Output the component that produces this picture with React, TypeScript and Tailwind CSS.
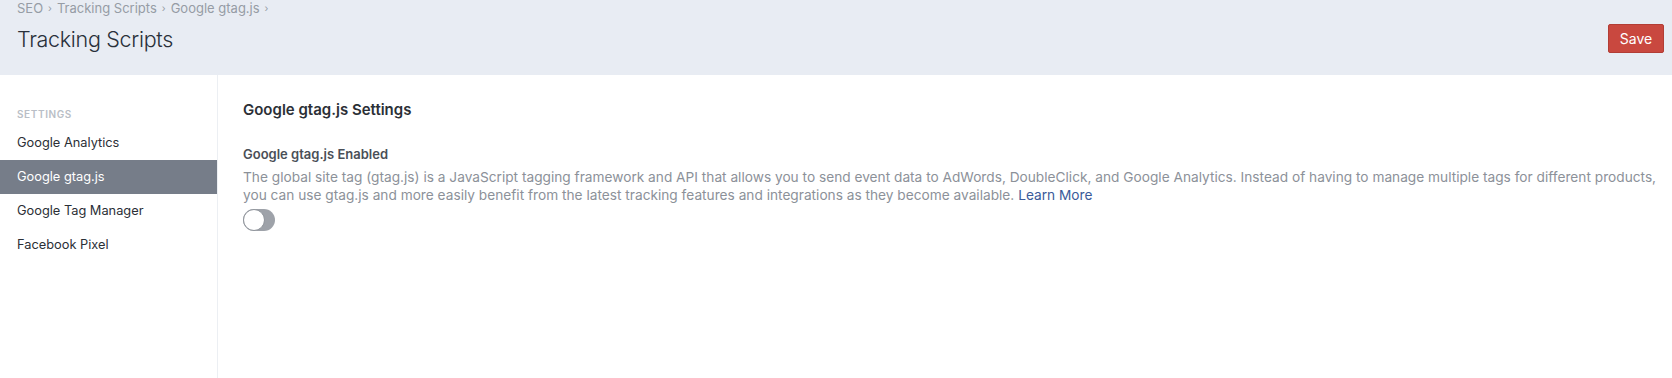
import { useState } from "react";

export default function App() {
  const items = ["Google Analytics", "Google gtag.js", "Google Tag Manager", "Facebook Pixel"];
  const [active, setActive] = useState("Google gtag.js");
  const [enabled, setEnabled] = useState(false);

  return (
    <div className="flex h-[378px] w-full flex-col bg-white font-['Inter',sans-serif] text-[#2b2f36]">
      {/* Header */}
      <div className="flex h-[75px] shrink-0 items-start justify-between bg-[#e8ecf3] pl-[17px] pr-[8px]">
        <div>
          <div className="flex items-center gap-[5px] pt-[1px] text-[13px] leading-[15px] text-[#969ca5]">
            <span>SEO</span>
            <span className="text-[10px]">›</span>
            <span>Tracking Scripts</span>
            <span className="text-[10px]">›</span>
            <span>Google gtag.js</span>
            <span className="text-[10px]">›</span>
          </div>
          <h1 className="mt-[9px] text-[21.5px] font-light leading-[28px] tracking-[-0.3px] text-[#29303a]">Tracking Scripts</h1>
        </div>
        <button className="mt-[24px] h-[29px] w-[56px] rounded-[2px] border border-[#b23d35] bg-[#c9483f] text-[14px] text-white">
          Save
        </button>
      </div>

      {/* Body */}
      <div className="flex flex-1">
        <div className="w-[218px] shrink-0 border-r border-[#eceff3] pt-[32px]">
          <div className="px-[17px] pb-[5px] text-[10px] font-semibold leading-[14px] tracking-[0.6px] text-[#b9bec6]">SETTINGS</div>
          {items.map((item) => (
            <div
              key={item}
              onClick={() => setActive(item)}
              className={
                item === active
                  ? "flex h-[34px] cursor-pointer items-center bg-[#767d89] px-[17px] text-[12.8px] text-white"
                  : "flex h-[34px] cursor-pointer items-center px-[17px] text-[12.8px] text-[#2b2f36]"
              }
            >
              {item}
            </div>
          ))}
        </div>

        <div className="flex-1 pl-[25px] pr-[8px] pt-[26px]">
          <h2 className="text-[15px] font-semibold leading-[18px] text-[#2b2f36]">Google gtag.js Settings</h2>
          <div className="mb-[5px] mt-[26px] text-[13px] font-semibold leading-[18px] text-[#4a4f57]">Google gtag.js Enabled</div>
          <p className="text-[13.7px] leading-[18px] text-[#8c9199]">
            The global site tag (gtag.js) is a JavaScript tagging framework and API that allows you to send event data to AdWords, DoubleClick, and Google Analytics. Instead of having to manage multiple tags for different products, you can use gtag.js and more easily benefit from the latest tracking features and integrations as they become available.{" "}
            <a className="text-[#3b5b9a]" href="#">Learn More</a>
          </p>
          <button
            onClick={() => setEnabled(!enabled)}
            className={
              enabled
                ? "relative mt-[5px] h-[22px] w-[32px] rounded-full bg-[#3b5b9a]"
                : "relative mt-[5px] h-[22px] w-[32px] rounded-full bg-[#9ea2a9]"
            }
          >
            <span
              className={
                enabled
                  ? "absolute left-[10px] top-0 h-[22px] w-[22px] rounded-full border border-[#8f949b] bg-white"
                  : "absolute left-0 top-0 h-[22px] w-[22px] rounded-full border border-[#8f949b] bg-white"
              }
            />
          </button>
        </div>
      </div>
    </div>
  );
}
